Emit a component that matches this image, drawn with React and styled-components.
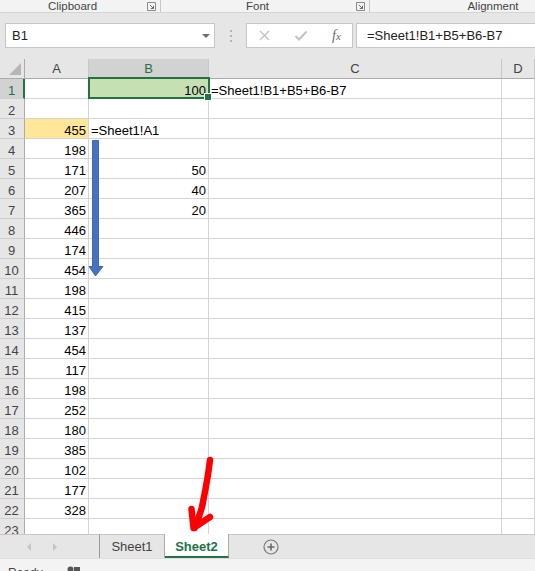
import React from "react";
import styled, { createGlobalStyle } from "styled-components";

const GlobalStyle = createGlobalStyle`
  html, body {
    margin: 0;
    padding: 0;
    background: #ffffff;
  }
  * {
    box-sizing: border-box;
  }
`;

const GREEN = "#217346";
const GRID = "#d4d4d4";

const Root = styled.div`
  position: relative;
  width: 535px;
  height: 571px;
  overflow: hidden;
  display: flex;
  flex-direction: column;
  font-family: "Liberation Sans", Arial, sans-serif;
  background: #fff;
`;

/* ribbon group labels */
const Ribbon = styled.div`
  height: 13px;
  flex: none;
  display: flex;
  background: #f3f3f3;
  border-bottom: 1px solid #d5d5d5;
  overflow: hidden;
`;

const RibbonGroup = styled.div`
  flex: none;
  width: ${({ w }) => w}px;
  display: flex;
  align-items: center;
  border-right: 1px solid #c8c8c8;
  height: 12px;
`;

const GroupLabel = styled.span`
  flex: 1;
  text-align: center;
  font-size: 11.5px;
  line-height: 12px;
  margin-top: -1px;
  color: #444;
  white-space: nowrap;
`;

const Launcher = styled.svg`
  flex: none;
  width: 9px;
  height: 9px;
  margin: 0 4px 0 2px;
`;

/* formula bar */
const FormulaArea = styled.div`
  height: 46px;
  flex: none;
  display: flex;
  align-items: flex-start;
  padding: 10px 0 0 5px;
  background: #e6e6e6;
`;

const NameBox = styled.div`
  width: 210px;
  height: 25px;
  background: #fff;
  border: 1px solid #c6c6c6;
  display: flex;
  align-items: center;
  justify-content: space-between;
  padding: 0 4px 0 6px;
  font-size: 13px;
  color: #222;
`;

const DropArrow = styled.span`
  width: 0;
  height: 0;
  border-left: 4px solid transparent;
  border-right: 4px solid transparent;
  border-top: 4px solid #6e6e6e;
`;

const Grip = styled.div`
  width: 31px;
  height: 25px;
  display: flex;
  flex-direction: column;
  align-items: center;
  justify-content: center;
  gap: 3px;
`;

const GripDot = styled.span`
  width: 2px;
  height: 2px;
  background: #b4b4b4;
`;

const FxBox = styled.div`
  width: 107px;
  height: 25px;
  background: #fff;
  border: 1px solid #c6c6c6;
  display: flex;
  align-items: center;
  padding-left: 11px;
`;

const FxButton = styled.span`
  width: ${({ w }) => w}px;
  display: flex;
  align-items: center;
  color: ${({ dim }) => (dim ? "#c2c2c2" : "#6a6a6a")};
  font-size: 14px;
  font-family: "Liberation Serif", "Times New Roman", serif;
  font-style: italic;
`;

const FormulaInput = styled.div`
  flex: 1;
  height: 25px;
  margin-left: 3px;
  background: #fff;
  border: 1px solid #c6c6c6;
  border-right: none;
  display: flex;
  align-items: center;
  padding-left: 10px;
  font-size: 13px;
  color: #222;
  white-space: nowrap;
  overflow: hidden;
`;

/* sheet */
const Sheet = styled.div`
  position: relative;
  height: 475px;
  flex: none;
  overflow: hidden;
  display: grid;
  grid-template-columns: 25px 64px 120px 293px 1fr;
  grid-auto-rows: 20px;
  align-content: start;
`;

const Corner = styled.div`
  position: relative;
  background: #e6e6e6;
  border-right: 1px solid #ababab;
  border-bottom: 1px solid #ababab;
  &::after {
    content: "";
    position: absolute;
    right: 3px;
    bottom: 3px;
    width: 0;
    height: 0;
    border-left: 12px solid transparent;
    border-bottom: 12px solid #b6b6b6;
  }
`;

const ColHeader = styled.div`
  background: ${({ active }) => (active ? "#d2d2d2" : "#e6e6e6")};
  color: ${({ active }) => (active ? GREEN : "#444")};
  border-right: 1px solid #c8c8c8;
  border-bottom: 1px solid #ababab;
  font-size: 13px;
  line-height: 19px;
  text-align: center;
`;

const RowHeader = styled.div`
  background: ${({ active }) => (active ? "#d2d2d2" : "#e6e6e6")};
  color: ${({ active }) => (active ? GREEN : "#444")};
  border-right: ${({ active }) => (active ? `2px solid ${GREEN}` : "1px solid #ababab")};
  border-bottom: 1px solid #cfcfcf;
  font-size: 13px;
  display: flex;
  align-items: flex-end;
  justify-content: center;
  line-height: 15px;
  padding-right: ${({ active }) => (active ? "0" : "1px")};
`;

const Cell = styled.div`
  position: relative;
  background: ${({ fill }) => fill || "#fff"};
  border-right: 1px solid ${GRID};
  border-bottom: 1px solid ${GRID};
  font-size: 13px;
  color: #000;
  display: flex;
  align-items: flex-end;
  justify-content: ${({ right }) => (right ? "flex-end" : "flex-start")};
  line-height: 15px;
  padding: 0 2px;
  white-space: nowrap;
  ${({ selected }) =>
    selected &&
    `
    &::before {
      content: "";
      position: absolute;
      top: -2px;
      left: -1px;
      right: -2px;
      bottom: -1px;
      border: 2px solid ${GREEN};
      z-index: 2;
    }
    &::after {
      content: "";
      position: absolute;
      right: -4px;
      bottom: -3px;
      width: 6px;
      height: 6px;
      background: ${GREEN};
      border: 1px solid #fff;
      z-index: 3;
    }
  `}
`;

const CellText = styled.span`
  position: relative;
  z-index: 1;
`;

const FillArrow = styled.svg`
  position: absolute;
  left: 88px;
  top: 81px;
  width: 16px;
  height: 138px;
  z-index: 4;
`;

/* sheet tabs */
const TabBar = styled.div`
  height: 24px;
  flex: none;
  display: flex;
  align-items: stretch;
  background: #e6e6e6;
`;

const TabNav = styled.div`
  width: 100px;
  display: flex;
  align-items: center;
  padding-left: 27px;
  gap: 22px;
  border-top: 1px solid #c6c6c6;
  border-right: 1px solid #9a9a9a;
`;

const NavArrow = styled.span`
  width: 0;
  height: 0;
  border-top: 4px solid transparent;
  border-bottom: 4px solid transparent;
  ${({ dir }) => (dir === "left" ? "border-right: 4px solid #c4c4c4;" : "border-left: 4px solid #c4c4c4;")}
`;

const Tab = styled.div`
  width: ${({ w }) => w}px;
  display: flex;
  align-items: center;
  justify-content: center;
  font-size: 13px;
  background: ${({ active }) => (active ? "#fff" : "#e6e6e6")};
  color: ${({ active }) => (active ? GREEN : "#444")};
  font-weight: ${({ active }) => (active ? 700 : 400)};
  border-top: ${({ active }) => (active ? "none" : "1px solid #c6c6c6")};
  border-right: 1px solid #ababab;
  border-bottom: ${({ active }) => (active ? `2px solid ${GREEN}` : "none")};
  padding-top: ${({ active }) => (active ? "2px" : "0")};
`;

const TabRest = styled.div`
  flex: 1;
  display: flex;
  align-items: center;
  padding-left: 34px;
  border-top: 1px solid #c6c6c6;
`;

const StatusBar = styled.div`
  flex: 1;
  background: #f3f3f3;
  border-top: 1px solid #e0e0e0;
  display: flex;
  align-items: flex-start;
  padding: 7px 0 0 8px;
  gap: 24px;
  font-size: 12px;
  color: #444;
  line-height: 14px;
`;

const Overlay = styled.svg`
  position: absolute;
  left: 0;
  top: 0;
  width: 535px;
  height: 571px;
  pointer-events: none;
  z-index: 10;
`;

const colA = [455, 198, 171, 207, 365, 446, 174, 454, 198, 415, 137, 454, 117, 198, 252, 180, 385, 102, 177, 328];

const rows = Array.from({ length: 24 }, (_, i) => {
  const n = i + 1;
  const r = { n, A: "", B: "", C: "" };
  if (n >= 3 && n <= 22) r.A = String(colA[n - 3]);
  if (n === 1) {
    r.B = "100";
    r.C = "=Sheet1!B1+B5+B6-B7";
  }
  if (n === 3) r.B = "=Sheet1!A1";
  if (n === 5) r.B = "50";
  if (n === 6) r.B = "40";
  if (n === 7) r.B = "20";
  return r;
});

const LauncherIcon = () => (
  <Launcher viewBox="0 0 9 9">
    <path d="M0.5 8.5V0.5H8.5V8.5Z" fill="none" stroke="#8a8a8a" strokeWidth="1" />
    <path d="M3 3L6.5 6.5M6.5 3.8V6.5H3.8" fill="none" stroke="#6a6a6a" strokeWidth="1" />
  </Launcher>
);

export default function App() {
  return (
    <Root>
      <GlobalStyle />
      <Ribbon>
        <RibbonGroup w={161}>
          <GroupLabel>Clipboard</GroupLabel>
          <LauncherIcon />
        </RibbonGroup>
        <RibbonGroup w={209}>
          <GroupLabel>Font</GroupLabel>
          <LauncherIcon />
        </RibbonGroup>
        <RibbonGroup w={262}>
          <GroupLabel>Alignment</GroupLabel>
          <LauncherIcon />
        </RibbonGroup>
      </Ribbon>

      <FormulaArea>
        <NameBox>
          <span>B1</span>
          <DropArrow />
        </NameBox>
        <Grip>
          <GripDot />
          <GripDot />
          <GripDot />
        </Grip>
        <FxBox>
          <FxButton w={36} dim>
            <svg width="13" height="13" viewBox="0 0 13 13">
              <path d="M2 2L11 11M11 2L2 11" stroke="#c2c2c2" strokeWidth="1.4" fill="none" />
            </svg>
          </FxButton>
          <FxButton w={38} dim>
            <svg width="14" height="13" viewBox="0 0 14 13">
              <path d="M1.5 7L5 10.5L12.5 2.5" stroke="#c2c2c2" strokeWidth="2" fill="none" />
            </svg>
          </FxButton>
          <FxButton w={20}>
            f<span style={{ fontSize: 11 }}>x</span>
          </FxButton>
        </FxBox>
        <FormulaInput>=Sheet1!B1+B5+B6-B7</FormulaInput>
      </FormulaArea>

      <Sheet>
        <Corner />
        <ColHeader>A</ColHeader>
        <ColHeader active>B</ColHeader>
        <ColHeader>C</ColHeader>
        <ColHeader>D</ColHeader>
        {rows.map((r) => (
          <React.Fragment key={r.n}>
            <RowHeader active={r.n === 1}>{r.n}</RowHeader>
            <Cell right fill={r.n === 3 ? "#ffe699" : undefined}>
              <CellText>{r.A}</CellText>
            </Cell>
            <Cell
              right={r.n !== 3}
              selected={r.n === 1}
              fill={r.n === 1 ? "#c6e0b4" : undefined}
            >
              <CellText>{r.B}</CellText>
            </Cell>
            <Cell>
              <CellText>{r.C}</CellText>
            </Cell>
            <Cell />
          </React.Fragment>
        ))}
        <FillArrow viewBox="0 0 16 138">
          <path
            d="M4.5 0.5H10.5V126.5H15L7.5 136L1 126.5H4.5Z"
            fill="#4472c4"
            stroke="#2f5597"
            strokeWidth="0.8"
          />
        </FillArrow>
      </Sheet>

      <TabBar>
        <TabNav>
          <NavArrow dir="left" />
          <NavArrow dir="right" />
        </TabNav>
        <Tab w={65}>Sheet1</Tab>
        <Tab w={64} active>
          Sheet2
        </Tab>
        <TabRest>
          <svg width="16" height="16" viewBox="0 0 16 16">
            <circle cx="8" cy="8" r="7" fill="none" stroke="#7a7a7a" strokeWidth="1.2" />
            <path d="M8 4.5V11.5M4.5 8H11.5" stroke="#6a6a6a" strokeWidth="1.6" />
          </svg>
        </TabRest>
      </TabBar>

      <StatusBar>
        <span>Ready</span>
        <svg width="14" height="10" viewBox="0 0 14 10">
          <circle cx="3.5" cy="3.5" r="3" fill="#555" />
          <rect x="7" y="1" width="6" height="5" fill="#555" />
          <rect x="1" y="6" width="12" height="4" fill="#555" />
        </svg>
      </StatusBar>

      <Overlay viewBox="0 0 535 571">
        <path
          d="M210 460C208 478 205 492 202 507C199 518 196 524 194.5 528"
          stroke="#ff0000"
          strokeWidth="6.5"
          fill="none"
          strokeLinecap="round"
        />
        <path
          d="M191.5 509L193.5 528L210 517"
          stroke="#ff0000"
          strokeWidth="6.5"
          fill="none"
          strokeLinecap="round"
          strokeLinejoin="round"
        />
      </Overlay>
    </Root>
  );
}
